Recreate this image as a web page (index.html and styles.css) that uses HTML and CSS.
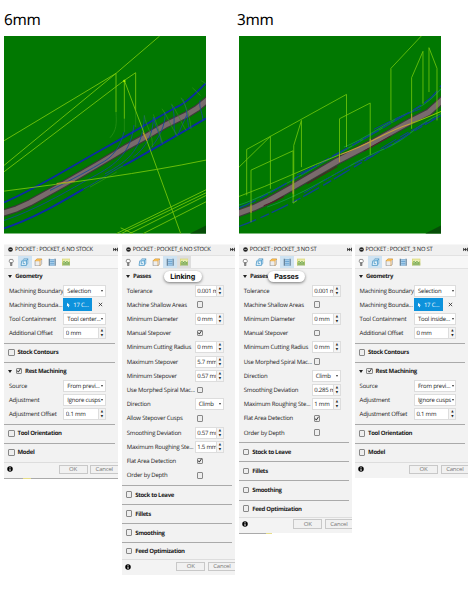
FILE: index.html
```
<!DOCTYPE html>
<html lang="en">
<head>
    <meta charset="UTF-8">
    <meta name="viewport" content="width=device-width, initial-scale=1.0">
    <title>Pocket 6mm / 3mm</title>
    <link rel="stylesheet" href="styles.css">
</head>
<body>
    <!-- shared icons -->
    <svg class="sprite" xmlns="http://www.w3.org/2000/svg">
        <symbol id="i-tool" viewBox="0 0 24 24"><path d="M8 13 6 9l2-5h8l2 5-2 4z" fill="#fff" stroke="#666" stroke-width="2"/><path d="M10 14h4v8h-4z" fill="#999" stroke="#555" stroke-width="1.5"/></symbol>
        <symbol id="i-geo" viewBox="0 0 24 24"><path d="M8 6l3-4h12v13l-4 4" fill="#a9d3ee" stroke="#5b94bb" stroke-width="1.5"/><path d="M5 8h13v13H3z" fill="#e8f5fc" stroke="#3c8dc2" stroke-width="2"/><path d="M18 8l4-5M9 9v7h5" fill="none" stroke="#3c8dc2" stroke-width="2"/></symbol>
        <symbol id="i-heights" viewBox="0 0 24 24"><path d="M3 8l5-5h14v13l-5 6H3z" fill="#eee" stroke="#777" stroke-width="1.5"/><path d="M3 8l5-5h14l-5 5z" fill="#ffc55c" stroke="#e69a22" stroke-width="1.5"/><path d="M17 8v14" stroke="#d99335" stroke-width="2"/></symbol>
        <symbol id="i-passes" viewBox="0 0 24 24"><path d="M2 2h4v20H2zM18 2h4v20h-4z" fill="#69859c"/><path d="M6 4h12v17H6z" fill="#b7d9f2"/><path d="M6 5h12M6 10h12M6 15h12M6 20h12" stroke="#4e8fc3" stroke-width="2"/></symbol>
        <symbol id="i-link" viewBox="0 0 24 24"><path d="M0 3h24v10H0z" fill="#e9edb2"/><path d="M0 13h24v8H0z" fill="#94b86b"/><path d="M1 14l5-5 4 5 4-5 4 5 5-4" fill="none" stroke="#4e962f" stroke-width="2"/><path d="M0 3h24M1 3v18M23 3v18" stroke="#d8d36a" stroke-width="2"/></symbol>
        <symbol id="i-info" viewBox="0 0 24 24"><circle cx="12" cy="12" r="11" fill="#000"/><path d="M10 10h4v8h2v1H9v-1h1zM10 5h4v3h-4z" fill="#fff"/></symbol>
        <symbol id="i-min" viewBox="0 0 24 24"><circle cx="12" cy="12" r="11" fill="#222"/><path d="M6 12h12" stroke="#ddd" stroke-width="3"/></symbol>
        <symbol id="i-ff" viewBox="0 0 24 24"><path d="M1 4l9 8-9 8zM10 4l9 8-9 8zM19 4h4v16h-4z" fill="#222"/></symbol>
        <symbol id="i-cursor" viewBox="0 0 24 24"><path d="M6 1l13 13h-7l3 7-4 2-3-8-4 4z" fill="#fff"/></symbol>
        <symbol id="i-x" viewBox="0 0 24 24"><path d="M4 4l16 16M20 4L4 20" stroke="#333" stroke-width="4"/></symbol>
        <symbol id="i-check" viewBox="0 0 24 24"><path d="M5 11l5 7L20 3" fill="none" stroke="#222" stroke-width="4"/></symbol>
    </svg>

    <div class="page">
        <div class="shots">
            <div class="shot">
                <h1>6mm</h1>
                <svg class="view" viewBox="12 107 606 592" preserveAspectRatio="none">
                    <rect x="12" y="107" width="606" height="592" fill="#017801"/>
                    <path d="M570 699l48-24v24z" fill="#064d08"/>
                    <g fill="none" stroke-linejoin="round">
                        <path d="M0 641L50 625L90 607L200 546L290 494L380 440L430 413L500 372L560 343L590 325L630 292" stroke="#3d3a3a" stroke-width="22"/>
                        <path d="M0 641L50 625L90 607L200 546L290 494L380 440L430 413L500 372L560 343L590 325L630 292" stroke="#796b6c" stroke-width="15"/>
                    </g>
                    <g fill="none" stroke="#0b2ba5" stroke-width="5.5">
                        <path d="M12 606C110 564 200 506 310 445S450 364 530 320C565 305 590 275 618 248"/>
                        <path d="M12 684C100 654 170 613 250 566M370 496C440 458 530 405 618 354"/>
                    </g>
                    <g fill="none" stroke="#12479b" stroke-width="2.5">
                        <path d="M250 566C300 540 330 515 370 496M12 660C100 630 180 585 250 545S390 480 402 374"/>
                        <path d="M150 570C190 550 250 520 300 490C340 470 360 440 372 395M315 520C390 480 430 440 433 345M400 470C440 440 460 400 460 350M445 450C475 420 500 370 494 335"/>
                        <path d="M460 350C465 380 482 400 484 428M515 314C530 350 515 375 528 405M548 295C565 330 560 360 568 385M600 300C596 325 610 340 608 362M535 400l25-55"/>
                    </g>
                    <g fill="none" stroke="#2f9418" stroke-width="2">
                        <path d="M348 335C350 370 350 390 330 412M373 355V395M407 330V380M433 345C438 380 460 400 457 440M460 342C470 370 480 400 488 430M486 325C505 350 512 380 533 407M514 310C535 340 545 370 558 390M543 292C560 320 570 350 573 385M577 262l25 24M602 240l16 10M270 560l80-45"/>
                    </g>
                    <g fill="none" stroke="#78c80c" stroke-width="2.6">
                        <path d="M12 421L348 219L479 107M12 495L348 219V335M12 514L373 240L407 217V330M373 240V355"/>
                        <path d="M373 240L433 400L542 699M12 572C220 545 420 520 618 479"/>
                        <path d="M350 699L618 568M364 699L618 577M390 699L618 585M430 699L618 604M362 682l36 17"/>
                    </g>
                    <path d="M170 549L225 542M429 396l12 25" stroke="#c79435" stroke-width="3"/>
                    <circle cx="373" cy="242" r="3.5" fill="#a5ef00"/>
                </svg>
            </div>
            <div class="shot">
                <h1 class="shift">3mm</h1>
                <svg class="view" viewBox="6 107 605 592" preserveAspectRatio="none">
                    <rect x="6" y="107" width="605" height="592" fill="#017801"/>
                    <path d="M564 699l47-24v24z" fill="#064d08"/>
                    <g fill="none" stroke="#10903e" stroke-width="3">
                        <path d="M6 614C100 582 190 525 290 468S480 355 555 315Q585 295 611 265M90 620C230 570 350 480 430 450S530 375 611 340M320 440C400 410 450 360 520 335"/>
                    </g>
                    <g fill="none" stroke="#0d4390" stroke-width="4" stroke-dasharray="55 14 28 9">
                        <path d="M6 622C90 590 190 520 290 465S470 365 550 315Q590 290 611 255M6 678C120 635 220 578 320 518S490 415 611 345"/>
                        <path d="M180 523Q270 480 320 450M200 578Q340 490 410 465M410 387Q480 350 550 325M430 445Q510 395 600 350" stroke-width="3"/>
                    </g>
                    <g fill="none" stroke-linejoin="round">
                        <path d="M-6 642L50 622L90 603L170 558L300 482L400 430L480 385L520 363L575 335L620 294" stroke="#3b3c3a" stroke-width="23"/>
                        <path d="M-6 642L50 622L90 603L170 558L300 482L400 430L480 385L520 363L575 335L620 294" stroke="#796b6c" stroke-width="16"/>
                    </g>
                    <path d="M80 616Q110 606 140 588M210 550L300 498M380 452L460 407" fill="none" stroke="#502127" stroke-width="3"/>
                    <g fill="none" stroke="#70c60c" stroke-width="2.5">
                        <path d="M6 500L100 408V565M29 585V447L328 282V440M42 665V509L168 451V608L180 600M170 590V435L193 360V500"/>
                        <path d="M307 485V355L399 308V463M461 360V204L552 107M523 385V232L557 153V310M575 275V142L599 204V360"/>
                        <path d="M6 588C110 550 210 500 310 462"/>
                    </g>
                    <path d="M310 462C410 427 440 395 520 370" fill="none" stroke="#c6a13c" stroke-width="3.5"/>
                    <path d="M520 370Q560 355 611 333" fill="none" stroke="#91c900" stroke-width="3"/>
                    <path d="M168 540v40M307 460v25M523 340v30M42 612v25M399 415v20" stroke="#b49a38" stroke-width="3"/>
                </svg>
            </div>
        </div>

        <div class="panels">
            <div class="panel wide">
                <div class="title"><svg><use href="#i-min"/></svg><span>POCKET : POCKET_6 NO STOCK</span><svg><use href="#i-ff"/></svg></div>
                <div class="tabs"><i><svg><use href="#i-tool"/></svg></i><i class="on"><svg><use href="#i-geo"/></svg></i><i><svg><use href="#i-heights"/></svg></i><i><svg><use href="#i-passes"/></svg></i><i><svg><use href="#i-link"/></svg></i></div>
                <div class="group">
                    <div class="head"><b class="tri"></b>Geometry</div>
                    <div class="row"><label>Machining Boundary</label><div class="field select">Selection</div></div>
                    <div class="row"><label>Machining Bounda...</label><div class="pick"><svg><use href="#i-cursor"/></svg>17 C...</div><svg class="clear"><use href="#i-x"/></svg></div>
                    <div class="row"><label>Tool Containment</label><div class="field select">Tool center...</div></div>
                    <div class="row"><label>Additional Offset</label><div class="field spin"><span>0 mm</span></div></div>
                </div>
                <div class="section"><div class="box"></div>Stock Contours</div>
                <div class="section open"><b class="tri"></b><div class="box"><svg><use href="#i-check"/></svg></div>Rest Machining</div>
                <div class="group">
                    <div class="row"><label>Source</label><div class="field select">From previ...</div></div>
                    <div class="row"><label>Adjustment</label><div class="field select">Ignore cusps</div></div>
                    <div class="row"><label>Adjustment Offset</label><div class="field spin"><span>0.1 mm</span></div></div>
                </div>
                <div class="section"><div class="box"></div>Tool Orientation</div>
                <div class="section"><div class="box"></div>Model</div>
                <div class="foot"><svg><use href="#i-info"/></svg><button>OK</button><button class="cancel">Cancel</button></div>
                <div class="edge full"></div>
            </div>

            <div class="panel">
                <div class="title"><svg><use href="#i-min"/></svg><span>POCKET : POCKET_6 NO STOCK</span><svg><use href="#i-ff"/></svg></div>
                <div class="tabs"><i><svg><use href="#i-tool"/></svg></i><i><svg><use href="#i-geo"/></svg></i><i><svg><use href="#i-heights"/></svg></i><i class="on"><svg><use href="#i-passes"/></svg></i><i class="hover"><svg><use href="#i-link"/></svg></i></div>
                <div class="tip linking">Linking</div>
                <div class="group">
                    <div class="head"><b class="tri"></b>Passes</div>
                    <div class="row"><label>Tolerance</label><div class="field spin"><span>0.001 mm</span></div></div>
                    <div class="row"><label>Machine Shallow Areas</label><div class="box"></div></div>
                    <div class="row"><label>Minimum Diameter</label><div class="field spin"><span>0 mm</span></div></div>
                    <div class="row"><label>Manual Stepover</label><div class="box"><svg><use href="#i-check"/></svg></div></div>
                    <div class="row"><label>Minimum Cutting Radius</label><div class="field spin"><span>0 mm</span></div></div>
                    <div class="row"><label>Maximum Stepover</label><div class="field spin"><span>5.7 mm</span></div></div>
                    <div class="row"><label>Minimum Stepover</label><div class="field spin"><span>0.57 mm</span></div></div>
                    <div class="row"><label>Use Morphed Spiral Mac...</label><div class="box"></div></div>
                    <div class="row"><label>Direction</label><div class="field select">Climb</div></div>
                    <div class="row"><label>Allow Stepover Cusps</label><div class="box"></div></div>
                    <div class="row"><label>Smoothing Deviation</label><div class="field spin"><span>0.57 mm</span></div></div>
                    <div class="row"><label>Maximum Roughing Ste...</label><div class="field spin"><span>1.5 mm</span></div></div>
                    <div class="row"><label>Flat Area Detection</label><div class="box"><svg><use href="#i-check"/></svg></div></div>
                    <div class="row"><label>Order by Depth</label><div class="box"></div></div>
                </div>
                <div class="section"><div class="box"></div>Stock to Leave</div>
                <div class="section"><div class="box"></div>Fillets</div>
                <div class="section"><div class="box"></div>Smoothing</div>
                <div class="section last"><div class="box"></div>Feed Optimization</div>
                <div class="foot"><svg><use href="#i-info"/></svg><button>OK</button><button class="cancel">Cancel</button></div>
            </div>

            <div class="panel third">
                <div class="title"><svg><use href="#i-min"/></svg><span>POCKET : POCKET_3 NO ST</span><svg><use href="#i-ff"/></svg></div>
                <div class="tabs"><i><svg><use href="#i-tool"/></svg></i><i><svg><use href="#i-geo"/></svg></i><i><svg><use href="#i-heights"/></svg></i><i class="on"><svg><use href="#i-passes"/></svg></i><i><svg><use href="#i-link"/></svg></i></div>
                <div class="tip passes">Passes</div>
                <div class="group">
                    <div class="head"><b class="tri"></b>Passes</div>
                    <div class="row"><label>Tolerance</label><div class="field spin"><span>0.001 mm</span></div></div>
                    <div class="row"><label>Machine Shallow Areas</label><div class="box"></div></div>
                    <div class="row"><label>Minimum Diameter</label><div class="field spin"><span>0 mm</span></div></div>
                    <div class="row"><label>Manual Stepover</label><div class="box"></div></div>
                    <div class="row"><label>Minimum Cutting Radius</label><div class="field spin"><span>0 mm</span></div></div>
                    <div class="row"><label>Use Morphed Spiral Mac...</label><div class="box"></div></div>
                    <div class="row"><label>Direction</label><div class="field select">Climb</div></div>
                    <div class="row"><label>Smoothing Deviation</label><div class="field spin"><span>0.285 mm</span></div></div>
                    <div class="row"><label>Maximum Roughing Ste...</label><div class="field spin"><span>1 mm</span></div></div>
                    <div class="row"><label>Flat Area Detection</label><div class="box"><svg><use href="#i-check"/></svg></div></div>
                    <div class="row"><label>Order by Depth</label><div class="box"></div></div>
                </div>
                <div class="section"><div class="box"></div>Stock to Leave</div>
                <div class="section"><div class="box"></div>Fillets</div>
                <div class="section"><div class="box"></div>Smoothing</div>
                <div class="section last"><div class="box"></div>Feed Optimization</div>
                <div class="foot"><svg><use href="#i-info"/></svg><button>OK</button><button class="cancel">Cancel</button></div>
                <div class="edge"></div>
            </div>

            <div class="panel wide fourth">
                <div class="title"><svg><use href="#i-min"/></svg><span>POCKET : POCKET_3 NO ST</span><svg><use href="#i-ff"/></svg></div>
                <div class="tabs"><i><svg><use href="#i-tool"/></svg></i><i class="on"><svg><use href="#i-geo"/></svg></i><i><svg><use href="#i-heights"/></svg></i><i><svg><use href="#i-passes"/></svg></i><i><svg><use href="#i-link"/></svg></i></div>
                <div class="group">
                    <div class="head"><b class="tri"></b>Geometry</div>
                    <div class="row"><label>Machining Boundary</label><div class="field select">Selection</div></div>
                    <div class="row"><label>Machining Bounda...</label><div class="pick"><svg><use href="#i-cursor"/></svg>17 C...</div><svg class="clear"><use href="#i-x"/></svg></div>
                    <div class="row"><label>Tool Containment</label><div class="field select">Tool inside...</div></div>
                    <div class="row"><label>Additional Offset</label><div class="field spin"><span>0 mm</span></div></div>
                </div>
                <div class="section"><div class="box"></div>Stock Contours</div>
                <div class="section open"><b class="tri"></b><div class="box"><svg><use href="#i-check"/></svg></div>Rest Machining</div>
                <div class="group">
                    <div class="row"><label>Source</label><div class="field select">From previ...</div></div>
                    <div class="row"><label>Adjustment</label><div class="field select">Ignore cusps</div></div>
                    <div class="row"><label>Adjustment Offset</label><div class="field spin"><span>0.1 mm</span></div></div>
                </div>
                <div class="section"><div class="box"></div>Tool Orientation</div>
                <div class="section"><div class="box"></div>Model</div>
                <div class="foot"><svg><use href="#i-info"/></svg><button>OK</button><button class="cancel">Cancel</button></div>
            </div>
        </div>
    </div>
</body>
</html>
```

FILE: styles.css
```
* { box-sizing: border-box; }
body { margin: 0; background: #fff; color: #222; font-family: "Open Sans", "Noto Sans", sans-serif; font-size: 6px; letter-spacing: -0.2px; line-height: 1; text-rendering: geometricPrecision; overflow: hidden; }
.sprite { display: none; }
.page { width: 474px; height: 591px; padding: 8px 0 0 4px; }

/* toolpath views */
.shots { display: flex; gap: 33px; height: 236px; }
.shot { width: 202px; }
h1 { margin: 0; height: 28px; font-family: "Noto Sans", sans-serif; font-size: 15.3px; letter-spacing: -0.3px; line-height: 24px; font-weight: 400; color: #000; }
h1.shift { margin-left: -2px; }
.view { display: block; width: 202px; height: 197.5px; }

/* dialogs */
.panels { display: flex; align-items: flex-start; gap: 4px; }
.panel { position: relative; width: 113.7px; background: #f2f2f2; white-space: nowrap; }
.panel.third { margin-left: -0.7px; }
.panel.fourth { margin-left: -1.8px; }
.title { display: flex; align-items: center; height: 11px; padding: 0 0 1px 4px; gap: 2px; font-size: 5.8px; letter-spacing: -0.22px; background: #f0f0f0; border-top: 1px solid #f7f7f7; }
.title svg { width: 5px; height: 5px; flex: none; }
.title span { flex: 1; }
.tabs { display: flex; height: 14px; background: #f7f7f7; border-top: 1px solid #e2e2e2; border-bottom: 1px solid #e2e2e2; }
.tabs i { display: flex; align-items: center; justify-content: center; width: 13.8px; }
.tabs svg { width: 8.5px; height: 8.5px; }
.tabs .on { background: #cfe3f2; }
.tabs .hover { background: #dedede; }
.group { padding-bottom: 2.6px; }
.head { display: flex; align-items: center; height: 14.4px; padding-left: 4px; font-weight: 700; letter-spacing: -0.33px; }
.tri { width: 0; height: 0; margin-right: 3.3px; border-left: 2px solid transparent; border-right: 2px solid transparent; border-top: 3.5px solid #222; }
.row { display: flex; align-items: center; height: 14.22px; padding-left: 5px; }
.row label { flex: none; width: 68px; }
.wide .row label { width: 54.3px; }
.field { position: relative; width: 29px; height: 12px; padding-left: 1.5px; line-height: 10px; background: #fff; border: 0.5px solid #ddd; overflow: hidden; }
.wide .field { width: 42.5px; }
.select, .wide .select { padding-left: 3px; }
.select::after { content: ""; position: absolute; right: 1.5px; top: 4px; border-left: 1.5px solid transparent; border-right: 1.5px solid transparent; border-top: 2.5px solid #333; }
.spin { display: flex; justify-content: space-between; }
.spin span { flex: 1; overflow: hidden; }
.spin::after { content: "▲\A▼"; white-space: pre; flex: none; width: 6px; font-family: "DejaVu Sans", sans-serif; font-size: 3px; line-height: 5px; text-align: center; background: #f4f4f4; border-left: 1px solid #ddd; }
.pick { display: flex; align-items: center; width: 29px; height: 12.5px; padding-left: 3px; gap: 2px; color: #fff; background: #0d92dc; }
.pick svg { width: 5px; height: 6px; }
.clear { width: 5px; height: 5px; margin-left: 5.5px; }
.box { display: flex; align-items: center; justify-content: center; flex: none; width: 6.5px; height: 6.5px; border: 1px solid #888; border-radius: 1px; background: #eee; }
.row .box { margin-left: 2px; }
.box svg { width: 5.5px; height: 5.5px; flex: none; }
.section { display: flex; align-items: center; position: relative; height: 19.05px; padding-left: 4px; font-weight: 700; letter-spacing: -0.33px; }
.section::before { content: ""; position: absolute; left: 0; top: 0; width: 110.5px; height: 1px; background: #aaa; }
.section .box { margin-right: 3px; }
.section.open { height: 16.6px; padding-top: 2px; }
.section .tri { margin-right: 3.5px; }
.section.last { height: 17px; padding-top: 1px; }
.foot { display: flex; align-items: center; height: 16px; padding: 0 0 2px 3px; background: #f3f3f3; border-top: 1px solid #ddd; }
.foot svg { width: 6px; height: 6px; margin-right: 45.5px; }
.foot button { width: 29px; height: 9.5px; padding: 0; font: inherit; letter-spacing: inherit; line-height: 7px; color: #777; background: #f1f1f1; border: 1px solid #c8c8c8; }
.foot .cancel { width: 27.5px; margin-left: 2.5px; border-right: none; }
.edge { height: 1px; background: linear-gradient(90deg, #aaa 0 27px, #e6dd8a 27px 33px, #fff 33px); }
.edge.full { background: linear-gradient(90deg, #aaa 0 19px, #e6dd8a 19px 27px, #aaa 27px); }
.tip { position: absolute; z-index: 2; top: 26.5px; width: 38px; height: 11.5px; line-height: 11px; text-align: center; font-family: Inter, sans-serif; font-size: 7.2px; font-weight: 700; letter-spacing: -0.1px; color: #111; background: #fff; border-radius: 6px; box-shadow: 0 1px 3px rgba(0, 0, 0, 0.5); }
.linking { left: 42px; }
.passes { left: 29.5px; width: 36.5px; }
```
